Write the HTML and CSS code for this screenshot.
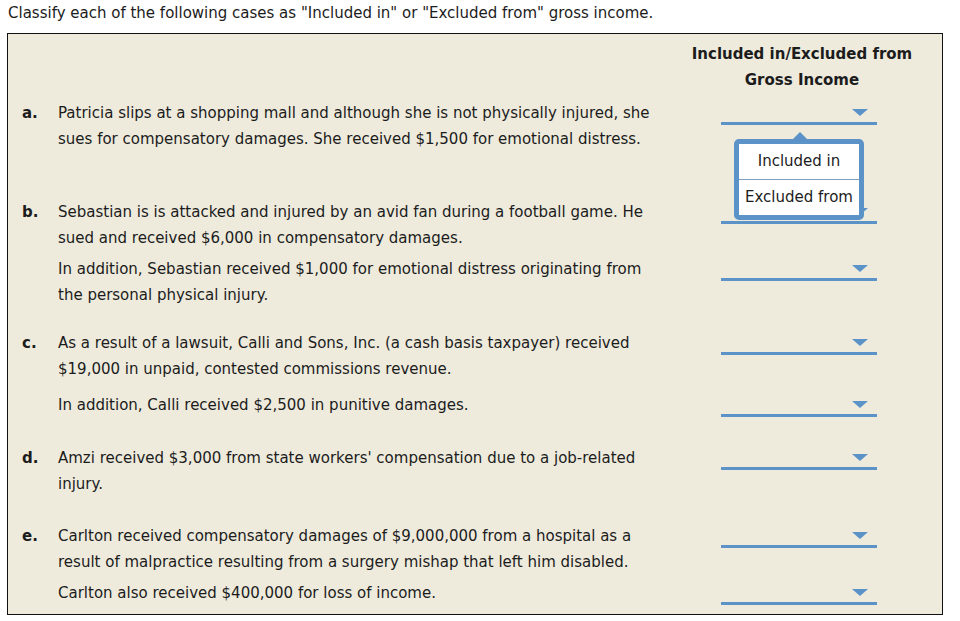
FILE: index.html
```html
<!DOCTYPE html>
<html>
<head>
<meta charset="utf-8">
<link rel="stylesheet" href="styles.css">
</head>
<body>
<p class="intro">Classify each of the following cases as "Included in" or "Excluded from" gross income.</p>
<div class="box">
  <div class="grid">
    <div class="head">Included in/Excluded from<br>Gross Income</div>

    <div class="label r-a">a.</div>
    <div class="text r-a">Patricia slips at a shopping mall and although she is not physically injured, she sues for compensatory damages. She received $1,500 for emotional distress.</div>
    <div class="dd r-a">
      <span class="arrow"></span>
      <div class="popup">
        <div class="opt">Included in</div>
        <div class="opt">Excluded from</div>
      </div>
    </div>

    <div class="label r-b">b.</div>
    <div class="text r-b">Sebastian is is attacked and injured by an avid fan during a football game. He sued and received $6,000 in compensatory damages.</div>
    <div class="dd r-b"><span class="arrow"></span></div>
    <div class="text sub5">In addition, Sebastian received $1,000 for emotional distress originating from the personal physical injury.</div>
    <div class="dd sub5"><span class="arrow"></span></div>

    <div class="label r-c">c.</div>
    <div class="text r-c">As a result of a lawsuit, Calli and Sons, Inc. (a cash basis taxpayer) received $19,000 in unpaid, contested commissions revenue.</div>
    <div class="dd r-c"><span class="arrow"></span></div>
    <div class="text sub10">In addition, Calli received $2,500 in punitive damages.</div>
    <div class="dd sub10"><span class="arrow"></span></div>

    <div class="label r-d">d.</div>
    <div class="text r-d">Amzi received $3,000 from state workers' compensation due to a job-related injury.</div>
    <div class="dd r-d"><span class="arrow"></span></div>

    <div class="label r-e">e.</div>
    <div class="text r-e">Carlton received compensatory damages of $9,000,000 from a hospital as a result of malpractice resulting from a surgery mishap that left him disabled.</div>
    <div class="dd r-e"><span class="arrow"></span></div>
    <div class="text sub5">Carlton also received $400,000 for loss of income.</div>
    <div class="dd sub5"><span class="arrow"></span></div>
  </div>
</div>
</body>
</html>
```

FILE: styles.css
```css
html, body {
  margin: 0;
  padding: 0;
  background: #ffffff;
}
body {
  font-family: "DejaVu Sans", Verdana, sans-serif;
  font-size: 15px;
  color: #1c1c1c;
  padding-left: 7px;
}
.intro {
  margin: 0;
  padding: 3px 0 0 1px;
  line-height: 20px;
  height: 30px;
}
.box {
  width: 934px;
  border: 1px solid #111;
  background: #eeebdc;
  padding: 7px 0 0 0;
  height: 573px;
}
.grid {
  display: grid;
  grid-template-columns: 14px 36px 663px 156px;
  line-height: 26px;
  align-items: start;
}
.head {
  grid-column: 4;
  margin: 0 -53px 7px -47px;
  text-align: center;
  font-weight: bold;
  white-space: nowrap;
}
.label {
  grid-column: 2;
  font-weight: bold;
}
.text {
  grid-column: 3;
  padding-right: 58px;
}
.dd {
  grid-column: 4;
  position: relative;
  height: 22px;
  border-bottom: 3px solid #5b93c8;
}
.arrow {
  position: absolute;
  right: 9px;
  top: 9px;
  width: 0;
  height: 0;
  border-left: 8px solid transparent;
  border-right: 8px solid transparent;
  border-top: 7px solid #5b93c8;
}
.r-b { margin-top: 47px; }
.r-c { margin-top: 22px; }
.r-d { margin-top: 27px; }
.r-e { margin-top: 26px; }
.sub5 { margin-top: 5px; }
.sub10 { margin-top: 10px; }

.popup {
  position: absolute;
  left: 13px;
  top: 39px;
  width: 120px;
  background: #fff;
  border: 5px solid #5b93c8;
  border-radius: 5px;
  z-index: 2;
}
.popup::before {
  content: "";
  position: absolute;
  left: 54px;
  top: -12px;
  width: 0;
  height: 0;
  border-left: 7px solid transparent;
  border-right: 7px solid transparent;
  border-bottom: 7px solid #5b93c8;
}
.opt {
  height: 35px;
  line-height: 35px;
  text-align: center;
  color: #1c1c1c;
}
.opt + .opt {
  border-top: 1px solid #7f9fbf;
}
```
